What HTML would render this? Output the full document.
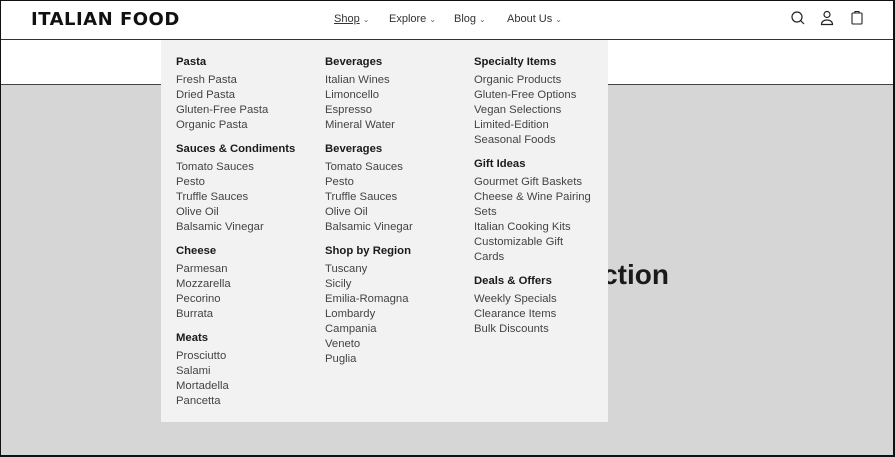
<!DOCTYPE html>
<html><head><style>
*{margin:0;padding:0;box-sizing:border-box}
body{width:895px;height:457px;position:relative;overflow:hidden;background:#fff;font-family:"Liberation Sans",sans-serif}
.frame{position:absolute;left:0;top:0;width:895px;height:457px;border:1.5px solid #111;border-right-width:2px;border-bottom-width:2px;z-index:10;pointer-events:none}
.hdr{position:absolute;left:0;top:0;width:895px;height:40px;border-bottom:1px solid #333;background:#fff}
.logo{position:absolute;left:31px;top:9px;font-family:"Comic Sans MS","DejaVu Sans",sans-serif;font-weight:bold;font-size:18px;letter-spacing:0.5px;color:#111}
.nav{position:absolute;top:13px;font-size:11px;color:#333}
.nav span.c{font-size:8px;color:#666;margin-left:3px}
.band{position:absolute;left:0;top:40px;width:895px;height:45px;border-bottom:1px solid #444;background:#fff}
.gray{position:absolute;left:0;top:85px;width:895px;height:372px;background:#d6d6d6}
.big{position:absolute;right:226px;top:174px;font-size:28px;font-weight:bold;color:#1a1a1a}
.dd{position:absolute;left:161px;top:40px;width:447px;height:382px;background:#f2f2f2}
.col{position:absolute;top:15px;font-size:11.3px;line-height:15px;color:#444;letter-spacing:0}
.col h4{font-size:11.3px;font-weight:bold;color:#1a1a1a;margin-bottom:3px}
.col .g{margin-bottom:9px}
</style></head><body>
<div class="hdr">
<div class="logo">ITALIAN FOOD</div>
<div class="nav" style="left:334px"><u>Shop</u><span class="c">&#8964;</span></div>
<div class="nav" style="left:389px">Explore<span class="c">&#8964;</span></div>
<div class="nav" style="left:454px">Blog<span class="c">&#8964;</span></div>
<div class="nav" style="left:507px">About Us<span class="c">&#8964;</span></div>
<svg style="position:absolute;left:790px;top:10px" width="16" height="16" viewBox="0 0 16 16" fill="none" stroke="#222" stroke-width="1.2"><circle cx="7" cy="7" r="5"/><path d="M10.5 10.5L14 14"/></svg>
<svg style="position:absolute;left:820px;top:10px" width="14" height="16" viewBox="0 0 14 16" fill="none" stroke="#222" stroke-width="1.2"><circle cx="7" cy="4.5" r="3"/><path d="M1.5 14.5c0-3 2.5-4.5 5.5-4.5s5.5 1.5 5.5 4.5z"/></svg>
<svg style="position:absolute;left:851px;top:10px" width="12" height="15" viewBox="0 0 12 15" fill="none" stroke="#222" stroke-width="1.1"><rect x="1" y="3" width="10" height="11" rx="1"/><path d="M4 3V1.5h4V3"/></svg>
</div>
<div class="band"></div>
<div class="gray"><div class="big">Explore Our Collection</div></div>
<div class="dd">
<div class="col" style="left:15px">
<div class="g"><h4>Pasta</h4>Fresh Pasta<br>Dried Pasta<br>Gluten-Free Pasta<br>Organic Pasta</div>
<div class="g"><h4>Sauces &amp; Condiments</h4>Tomato Sauces<br>Pesto<br>Truffle Sauces<br>Olive Oil<br>Balsamic Vinegar</div>
<div class="g"><h4>Cheese</h4>Parmesan<br>Mozzarella<br>Pecorino<br>Burrata</div>
<div class="g"><h4>Meats</h4>Prosciutto<br>Salami<br>Mortadella<br>Pancetta</div>
</div>
<div class="col" style="left:164px">
<div class="g"><h4>Beverages</h4>Italian Wines<br>Limoncello<br>Espresso<br>Mineral Water</div>
<div class="g"><h4>Beverages</h4>Tomato Sauces<br>Pesto<br>Truffle Sauces<br>Olive Oil<br>Balsamic Vinegar</div>
<div class="g"><h4>Shop by Region</h4>Tuscany<br>Sicily<br>Emilia-Romagna<br>Lombardy<br>Campania<br>Veneto<br>Puglia</div>
</div>
<div class="col" style="left:313px">
<div class="g"><h4>Specialty Items</h4>Organic Products<br>Gluten-Free Options<br>Vegan Selections<br>Limited-Edition<br>Seasonal Foods</div>
<div class="g"><h4>Gift Ideas</h4>Gourmet Gift Baskets<br>Cheese &amp; Wine Pairing<br>Sets<br>Italian Cooking Kits<br>Customizable Gift<br>Cards</div>
<div class="g"><h4>Deals &amp; Offers</h4>Weekly Specials<br>Clearance Items<br>Bulk Discounts</div>
</div>
</div>
<div class="frame"></div>
</body></html>
